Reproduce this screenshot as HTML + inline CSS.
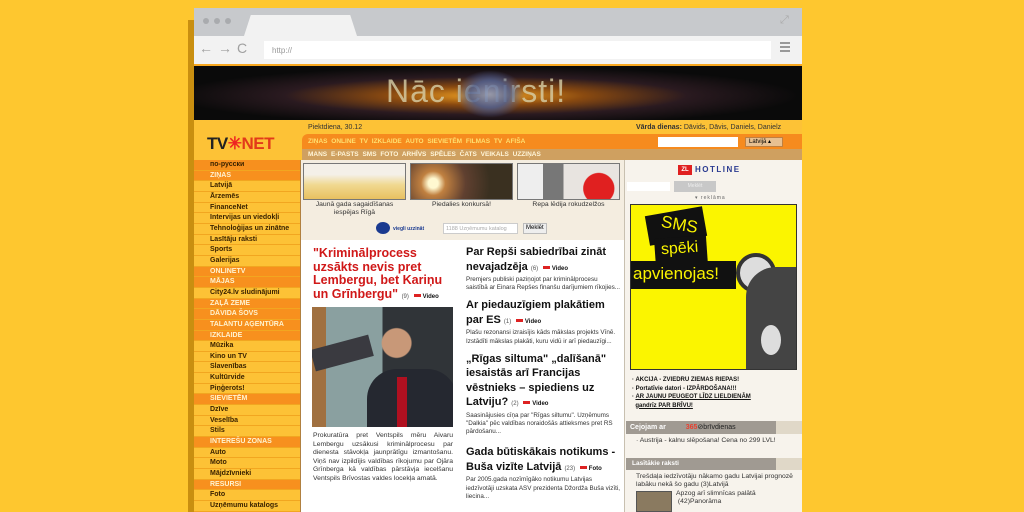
<!DOCTYPE html>
<html style="width:1024px;height:512px;overflow:hidden"><head><meta charset="utf-8"><style>
*{margin:0;padding:0;box-sizing:border-box}
body{width:1024px;height:512px;background:#fec72f;position:relative;overflow:hidden;font-family:"Liberation Sans",sans-serif}
.a{position:absolute}
.nav div{height:10.67px;line-height:10.67px;font-size:7px;font-weight:bold;padding-left:16px;color:#3a2200;background:#fdc236;border-bottom:1px solid #f2a620}
.nav div.h{background:#f7901e;color:#fff3d0}
.t{font-size:6.8px;color:#333;line-height:8.4px}
.r .t{font-size:6.3px;line-height:8.2px}
.hl{font-weight:bold;color:#111;font-size:11px;line-height:14.5px}
.v{font-size:6px;color:#555;font-weight:normal}
.v b{color:#111}
.v i{display:inline-block;width:7px;height:3px;background:#d22;margin:0 2px 1px 3px;font-style:normal}
</style></head><body>
<div class="a" style="left:188px;top:20px;width:8px;height:492px;background:#c98f10"></div>
<div class="a" style="left:194px;top:8px;width:608px;height:504px;background:#fff"></div>
<div class="a" style="left:194px;top:8px;width:608px;height:28px;background:#c7c9cc"></div>
<div class="a" style="left:203px;top:18px;width:6px;height:6px;border-radius:3px;background:#a9abae;box-shadow:11px 0 #a9abae,22px 0 #a9abae"></div>
<div class="a" style="left:244px;top:15px;width:113px;height:21px;background:#f2f2f2;clip-path:polygon(6% 0,94% 0,100% 100%,0 100%);border-radius:4px 4px 0 0"></div>
<div class="a" style="left:780px;top:14px;font-size:11px;color:#aaa">⤢</div>
<div class="a" style="left:194px;top:36px;width:608px;height:28px;background:#f2f2f2"></div>
<div class="a" style="left:199px;top:40px;font-size:14px;color:#a0a0a0;letter-spacing:5px">←→C</div>
<div class="a" style="left:264px;top:41px;width:507px;height:18px;background:#fff;font-size:8px;color:#999;padding:5px 8px">http://</div>
<div class="a" style="left:780px;top:42px;width:10px;height:2px;background:#999;box-shadow:0 4px #999,0 8px #999"></div>
<!-- banner -->
<div class="a" style="left:194px;top:64px;width:608px;height:56px;background:radial-gradient(ellipse at 48% 55%,#f0a020 0%,#8a4a10 22%,#2a1a20 45%,#0a0a0a 70%);border-top:2px solid #f8a820"></div>
<div class="a" style="left:386px;top:73px;font-size:32px;color:#d8d0a8;opacity:.8;letter-spacing:1px">Nāc ienirsti!</div>
<div class="a" style="left:455px;top:70px;width:70px;height:48px;background:radial-gradient(ellipse,#8898c0 0%,#506090 40%,transparent 70%);opacity:.85"></div>
<!-- header -->
<div class="a" style="left:194px;top:120px;width:608px;height:40px;background:#fdc236"></div>
<div class="a" style="left:207px;top:134px;font-size:17px;font-weight:900;color:#222;letter-spacing:-0.5px">TV<span style="color:#e22">✳</span><span style="color:#e23a1a">NET</span></div>
<div class="a" style="left:308px;top:124px;font-size:7px;color:#333">Piektdiena, 30.12</div>
<div class="a" style="left:636px;top:124px;font-size:7px;color:#333"><b>Vārda dienas:</b> Dāvids, Dāvis, Daniels, Danielz</div>
<div class="a" style="left:302px;top:134px;width:500px;height:15px;background:#f68b1e;border-radius:6px 0 0 0"></div>
<div class="a" style="left:308px;top:138px;font-size:6.5px;font-weight:bold;color:#ffe070;word-spacing:2px">ZIŅAS ONLINE TV IZKLAIDE AUTO SIEVIETĒM FILMAS TV AFIŠA</div>
<div class="a" style="left:658px;top:137px;width:80px;height:10px;background:#fff"></div>
<div class="a" style="left:745px;top:137px;width:38px;height:10px;background:#e8c090;border:1px solid #c08040;font-size:6px;padding-left:3px">Latvijā ▴</div>
<div class="a" style="left:302px;top:149px;width:500px;height:11px;background:#cfa060"></div>
<div class="a" style="left:308px;top:151px;font-size:6.5px;font-weight:bold;color:#fff5d8;word-spacing:2px">MANS E-PASTS SMS FOTO ARHĪVS SPĒLES ČATS VEIKALS UZZIŅAS</div>
<!-- left nav -->
<div class="a nav" style="left:194px;top:160px;width:106px">
<div class="h" style="color:#3a2200">по-русски</div><div class="h">ZIŅAS</div><div>Latvijā</div><div>Ārzemēs</div><div>FinanceNet</div><div>Intervijas un viedokļi</div><div>Tehnoloģijas un zinātne</div><div>Lasītāju raksti</div><div>Sports</div><div>Galerijas</div><div class="h">ONLINETV</div><div class="h">MĀJAS</div><div>City24.lv sludinājumi</div><div class="h">ZAĻĀ ZEME</div><div class="h">DĀVIDA ŠOVS</div><div class="h">TALANTU AĢENTŪRA</div><div class="h">IZKLAIDE</div><div>Mūzika</div><div>Kino un TV</div><div>Slavenības</div><div>Kultūrvide</div><div>Piņģerots!</div><div class="h">SIEVIETĒM</div><div>Dzīve</div><div>Veselība</div><div>Stils</div><div class="h">INTEREŠU ZONAS</div><div>Auto</div><div>Moto</div><div>Mājdzīvnieki</div><div class="h">RESURSI</div><div>Foto</div><div>Uzņēmumu katalogs</div></div>
<!-- center -->
<div class="a" style="left:300px;top:160px;width:324px;height:80px;background:#f4ede0;border-left:1px solid #b08040"></div>
<div class="a" style="left:303px;top:163px;width:103px;height:37px;background:linear-gradient(#f4f0e8 30%,#f0d890 60%,#e8c060);border:1px solid #777"></div>
<div class="a" style="left:410px;top:163px;width:103px;height:37px;background:radial-gradient(circle at 22% 55%,#fff8d0 0 6%,#c08040 15%,#604030 40%,#3a3020 70%);border:1px solid #777"></div>
<div class="a" style="left:517px;top:163px;width:103px;height:37px;background:radial-gradient(circle at 80% 70%,#e02020 0 18%,transparent 19%),linear-gradient(90deg,#eee 0 25%,#777 25% 45%,#e8e4e0 45%);border:1px solid #777"></div>
<div class="a t" style="left:303px;top:201px;width:103px;text-align:center">Jaunā gada sagaidīšanas iespējas Rīgā</div>
<div class="a t" style="left:410px;top:201px;width:103px;text-align:center">Piedalies konkursā!</div>
<div class="a t" style="left:517px;top:201px;width:103px;text-align:center">Repa lēdija rokudzelžos</div>
<div class="a" style="left:376px;top:222px;width:14px;height:12px;border-radius:50%;background:#1a3a90"></div>
<div class="a" style="left:393px;top:226px;font-size:5px;font-weight:bold;color:#1a3a90">viegli uzzināt</div>
<div class="a" style="left:443px;top:223px;width:75px;height:11px;background:#fff;border:1px solid #ccc;font-size:5.5px;color:#aaa;padding:2px">1188 Uzņēmumu katalog</div>
<div class="a" style="left:523px;top:223px;width:24px;height:11px;background:#eee;border:1px solid #bbb;font-size:6px;padding:1px 2px">Meklēt</div>
<div class="a" style="left:300px;top:240px;width:324px;height:272px;background:#fff;border-left:1px solid #b08040"></div>
<div class="a" style="left:313px;top:247px;width:145px;font-size:12.5px;line-height:13.5px;font-weight:bold;color:#d01818">"Kriminālprocess uzsākts nevis pret Lembergu, bet Kariņu un Grīnbergu" <span class="v">(9) <i></i><b>Video</b></span></div>
<div class="a" style="left:312px;top:307px;width:141px;height:120px;background:radial-gradient(ellipse at 60% 30%,#c89878 0 12%,transparent 13%),linear-gradient(90deg,#a07040 0 10%,#8aa0a0 10% 50%,#303438 50%);overflow:hidden">
<div class="a" style="left:55px;top:62px;width:90px;height:60px;background:#252830;border-radius:30px 30px 0 0"></div>
<div class="a" style="left:85px;top:70px;width:10px;height:50px;background:#b01020"></div>
<div class="a" style="left:0;top:35px;width:60px;height:22px;background:#3a3a40;transform:rotate(-15deg)"></div></div>
<div class="a t" style="left:313px;top:432px;width:140px;text-align:justify;line-height:8.6px">Prokuratūra pret Ventspils mēru Aivaru Lembergu uzsākusi kriminālprocesu par dienesta stāvokļa jaunprātīgu izmantošanu. Viņš nav izpildījis valdības rīkojumu par Ojāra Grīnberga kā valdības pārstāvja iecelšanu Ventspils Brīvostas valdes locekļa amatā.</div>
<div class="a r" style="left:466px;top:245px;width:154px">
<div class="hl">Par Repši sabiedrībai zināt nevajadzēja <span class="v">(6) <i></i><b>Video</b></span></div>
<div class="t" style="margin-bottom:6px">Premjers publiski paziņojot par kriminālprocesu saistībā ar Einara Repšes finanšu darījumiem rīkojies...</div>
<div class="hl">Ar piedauzīgiem plakātiem par ES <span class="v">(1) <i></i><b>Video</b></span></div>
<div class="t" style="margin-bottom:6px">Plašu rezonansi izraisījis kāds mākslas projekts Vīnē. Izstādīti mākslas plakāti, kuru vidū ir arī piedauzīgi...</div>
<div class="hl">„Rīgas siltuma" „dalīšanā" iesaistās arī Francijas vēstnieks – spiediens uz Latviju? <span class="v">(2) <i></i><b>Video</b></span></div>
<div class="t" style="margin-bottom:9px">Saasinājusies cīņa par "Rīgas siltumu". Uzņēmums "Dalkia" pēc valdības noraidošās attieksmes pret RS pārdošanu...</div>
<div class="hl">Gada būtiskākais notikums - Buša vizīte Latvijā <span class="v">(23) <i></i><b>Foto</b></span></div>
<div class="t">Par 2005.gada nozīmīgāko notikumu Latvijas iedzīvotāji uzskata ASV prezidenta Džordža Buša vizīti, liecina...</div></div>
<!-- right -->
<div class="a" style="left:624px;top:160px;width:178px;height:352px;background:#f7f3ec;border-left:1px solid #c8c0b0"></div>
<div class="a" style="left:678px;top:165px;width:14px;height:10px;background:#e02020;color:#fff;font-size:6px;font-weight:bold;text-align:center;line-height:10px">ZL</div>
<div class="a" style="left:695px;top:165px;font-size:8px;font-weight:bold;color:#2a3a90;letter-spacing:1.5px">HOTLINE</div>
<div class="a" style="left:627px;top:182px;width:43px;height:9px;background:#fff"></div>
<div class="a" style="left:674px;top:181px;width:42px;height:11px;background:#c8c8c8;font-size:5px;color:#eee;text-align:center;line-height:11px">Meklēt</div>
<div class="a" style="left:695px;top:195px;font-size:5px;color:#666;letter-spacing:1px">▾ reklāma</div>
<div class="a" style="left:630px;top:204px;width:167px;height:166px;background:#fbf500;border:1px solid #333;overflow:hidden">
<div class="a" style="left:16px;top:6px;width:58px;height:30px;background:#111;transform:rotate(-10deg)"></div>
<div class="a" style="left:24px;top:32px;width:52px;height:30px;background:#111;transform:rotate(-4deg)"></div>
<div class="a" style="left:0;top:56px;width:105px;height:28px;background:#111"></div>
<div class="a" style="left:30px;top:10px;font-size:17px;color:#fbf500;transform:rotate(10deg)">SMS</div>
<div class="a" style="left:30px;top:35px;font-size:16px;color:#fbf500;transform:rotate(-4deg)">spēki</div>
<div class="a" style="left:2px;top:59px;font-size:17px;color:#fbf500">apvienojas!</div>
<div class="a" style="left:105px;top:48px;width:40px;height:40px;border-radius:50%;background:#ddd;border:4px solid #333"></div>
<div class="a" style="left:115px;top:62px;width:60px;height:110px;background:#444;border-radius:30px 0 0 0"></div>
<div class="a" style="left:130px;top:120px;width:20px;height:30px;background:#ddd;border-radius:50%"></div></div>
<div class="a" style="left:632px;top:376px;font-size:6px;font-weight:bold;color:#111;line-height:8.5px">· AKCIJA - ZVIEDRU ZIEMAS RIEPAS!<br>· Portatīvie datori - IZPĀRDOŠANA!!!<br>· <u>AR JAUNU PEUGEOT LĪDZ LIELDIENĀM</u><br>&nbsp; <u>gandrīz PAR BRĪVU!</u></div>
<div class="a" style="left:626px;top:421px;width:176px;height:13px;background:#a09a92"></div>
<div class="a" style="left:776px;top:421px;width:26px;height:13px;background:#e0d8c8"></div>
<div class="a" style="left:630px;top:423px;font-size:7px;font-weight:bold;color:#fff">Cejojam ar <span style="color:#e84030;margin-left:18px">365</span><span style="color:#222;font-weight:normal">⊘brīvdienas</span></div>
<div class="a t" style="left:636px;top:437px;width:160px">· Austrija - kalnu slēpošana! Cena no 299 LVL!</div>
<div class="a" style="left:626px;top:458px;width:150px;height:12px;background:#a09a92"></div>
<div class="a" style="left:776px;top:458px;width:26px;height:12px;background:#e0d8c8"></div>
<div class="a" style="left:632px;top:460px;font-size:6.5px;font-weight:bold;color:#fff">Lasītākie raksti</div>
<div class="a t" style="left:636px;top:473px;width:164px">Trešdaļa iedzīvotāju nākamo gadu Latvijai prognozē labāku nekā šo gadu (3)Latvijā</div>
<div class="a" style="left:636px;top:491px;width:36px;height:21px;background:#8a7a60;border:1px solid #555"></div>
<div class="a t" style="left:676px;top:490px">Apzog arī slimnīcas palātā<br>&nbsp;(42)Panorāma</div>
</body></html>
